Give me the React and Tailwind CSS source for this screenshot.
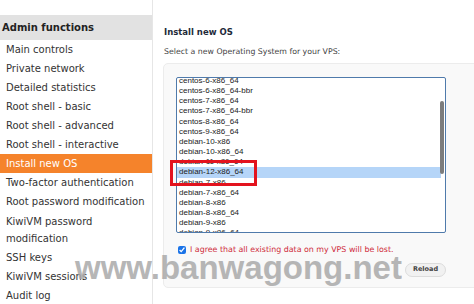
import React from 'react';

const menu = [
  'Main controls',
  'Private network',
  'Detailed statistics',
  'Root shell - basic',
  'Root shell - advanced',
  'Root shell - interactive',
  'Install new OS',
  'Two-factor authentication',
  'Root password modification',
  'KiwiVM password modification',
  'SSH keys',
  'KiwiVM sessions',
  'Audit log',
];

const osList = [
  'centos-6-x86_64',
  'centos-6-x86_64-bbr',
  'centos-7-x86_64',
  'centos-7-x86_64-bbr',
  'centos-8-x86_64',
  'centos-9-x86_64',
  'debian-10-x86',
  'debian-10-x86_64',
  'debian-11-x86_64',
  'debian-12-x86_64',
  'debian-7-x86',
  'debian-7-x86_64',
  'debian-8-x86',
  'debian-8-x86_64',
  'debian-9-x86',
  'debian-9-x86_64',
  'debian-9-x86_64-bbr',
];

export default function App() {
  return (
    <div className="relative w-[474px] h-[304px] overflow-hidden bg-white flex font-['DejaVu_Sans',Verdana,sans-serif]">
      {/* Sidebar */}
      <aside className="w-[153px] shrink-0 border-r border-[#e6e6e6] pt-[15px]">
        <div className="h-[25px] bg-[#e2e2e2] pl-[2px] flex items-center font-bold text-[10px] text-[#222]">
          Admin functions
        </div>
        <ul>
          {menu.map((item) =>
            item === 'KiwiVM password modification' ? (
              <li key={item} className="pl-[6px] pt-[2px] pb-[1px] text-[10px] leading-[17px] text-[#333] h-[37px]">
                KiwiVM password
                <br />
                modification
              </li>
            ) : (
              <li
                key={item}
                className={`h-[19px] pl-[6px] flex items-center text-[10px] ${
                  item === 'Install new OS' ? 'bg-[#f5832b] text-white' : 'text-[#333]'
                }`}
              >
                {item}
              </li>
            )
          )}
        </ul>
      </aside>

      {/* Main */}
      <main className="flex-1 pl-[10px] pt-[26px]">
        <h2 className="pl-[1px] font-bold text-[8.5px] leading-[12px] text-[#1e2a3a]">Install new OS</h2>
        <p className="pl-[1px] mt-[9px] text-[7.8px] leading-[10px] text-[#444]">
          Select a new Operating System for your VPS:
        </p>

        <div className="mt-[6px] w-[340px] bg-[#f9f9f9] border border-[#ececec] rounded-[5px] pl-[12px] pt-[13px] pb-[10px]">
          {/* Listbox */}
          <div className="relative w-[270px] h-[156px] border border-[#4f7aab] rounded-[2px] bg-white overflow-hidden">
            <ul className="-mt-[2px] font-['Liberation_Sans',Arial,sans-serif] text-[8px] leading-[10.15px] text-[#222]">
              {osList.map((os) => (
                <li
                  key={os}
                  className={`pl-[2px] ${os === 'debian-12-x86_64' ? 'bg-[#b5d5f8] mr-[4px]' : ''}`}
                >
                  {os}
                </li>
              ))}
            </ul>
            <div className="absolute right-[1px] top-[23px] w-[4px] h-[73px] rounded-full bg-[#7d7d7d]" />
          </div>

          {/* Checkbox */}
          <label className="mt-[11px] pl-[2px] flex items-center gap-[4px] text-[7.9px] text-[#cf2b3b]">
            <input type="checkbox" defaultChecked className="w-[8px] h-[8px] m-0 accent-[#1a73e8]" />
            I agree that all existing data on my VPS will be lost.
          </label>

          <div className="w-[270px] mt-[7px] flex justify-end">
            <button className="h-[14px] w-[41px] rounded-full bg-[#f1f1f1] border border-[#dcdcdc] text-[6.5px] font-bold text-[#444]">
              Reload
            </button>
          </div>
        </div>
      </main>

      {/* Highlight box */}
      <div className="absolute left-[170px] top-[160px] w-[87px] h-[26px] border-[3px] border-[#e3131e]" />

      {/* Watermark */}
      <div className="absolute left-[75px] top-[248px] font-['Liberation_Sans',Arial,sans-serif] font-bold text-[33px] leading-[40px] text-[#aaaaaa] opacity-85 pointer-events-none">
        www.banwagong.net
      </div>
    </div>
  );
}
